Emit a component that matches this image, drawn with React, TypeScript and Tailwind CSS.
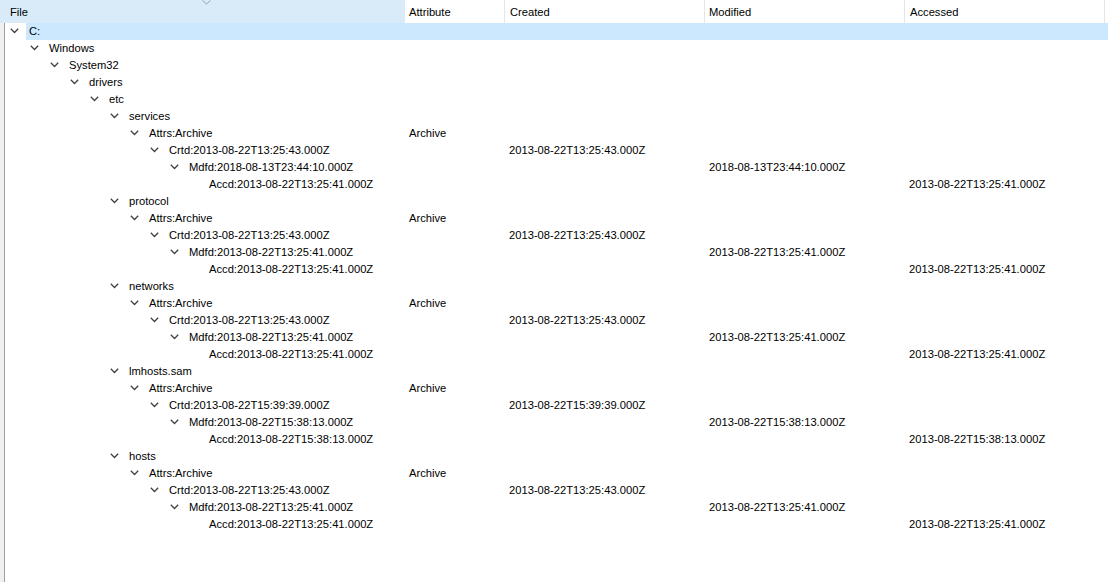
import React from 'react';

type Row = {
  level: number;
  label: string;
  expandable: boolean;
  attribute?: string;
  created?: string;
  modified?: string;
  accessed?: string;
};

const files = [
  { name: 'services', crtd: '2013-08-22T13:25:43.000Z', mdfd: '2018-08-13T23:44:10.000Z', accd: '2013-08-22T13:25:41.000Z' },
  { name: 'protocol', crtd: '2013-08-22T13:25:43.000Z', mdfd: '2013-08-22T13:25:41.000Z', accd: '2013-08-22T13:25:41.000Z' },
  { name: 'networks', crtd: '2013-08-22T13:25:43.000Z', mdfd: '2013-08-22T13:25:41.000Z', accd: '2013-08-22T13:25:41.000Z' },
  { name: 'lmhosts.sam', crtd: '2013-08-22T15:39:39.000Z', mdfd: '2013-08-22T15:38:13.000Z', accd: '2013-08-22T15:38:13.000Z' },
  { name: 'hosts', crtd: '2013-08-22T13:25:43.000Z', mdfd: '2013-08-22T13:25:41.000Z', accd: '2013-08-22T13:25:41.000Z' },
];

const rows: Row[] = [
  { level: 0, label: 'C:', expandable: true },
  { level: 1, label: 'Windows', expandable: true },
  { level: 2, label: 'System32', expandable: true },
  { level: 3, label: 'drivers', expandable: true },
  { level: 4, label: 'etc', expandable: true },
  ...files.flatMap((f) => [
    { level: 5, label: f.name, expandable: true },
    { level: 6, label: 'Attrs:Archive', expandable: true, attribute: 'Archive' },
    { level: 7, label: 'Crtd:' + f.crtd, expandable: true, created: f.crtd },
    { level: 8, label: 'Mdfd:' + f.mdfd, expandable: true, modified: f.mdfd },
    { level: 9, label: 'Accd:' + f.accd, expandable: false, accessed: f.accd },
  ]),
];

// column layout shared by header and rows
const cols = 'grid grid-cols-[405px_100px_200px_200px_200px_1fr]';

function Chevron() {
  return (
    <svg width="9" height="6" viewBox="0 0 9 6" className="shrink-0">
      <path d="M0.8 0.8 L4.5 4.5 L8.2 0.8" fill="none" stroke="#404040" strokeWidth="1.3" />
    </svg>
  );
}

function Cell({ children }: { children?: React.ReactNode }) {
  return <div className="pl-1 whitespace-nowrap overflow-hidden">{children}</div>;
}

export default function App() {
  return (
    <div
      className="w-[1108px] h-[582px] bg-white text-black text-[11.2px] overflow-hidden flex flex-col"
      style={{ fontFamily: '"Liberation Sans", Arial, sans-serif' }}
    >
      {/* header */}
      <div className={`${cols} h-[23px] items-center shrink-0`}>
        <div className="relative h-full flex items-center pl-[10px] pt-[2px] bg-[#d9ebf9]">
          File
          <svg width="9" height="5" viewBox="0 0 9 5" className="absolute left-[202px] top-0">
            <path d="M0.5 0.5 L4.5 4 L8.5 0.5" fill="none" stroke="#8ea3b8" strokeWidth="1" />
          </svg>
        </div>
        <div className="h-full flex items-center pl-1 pt-[2px] border-r border-[#e5e5e5]">Attribute</div>
        <div className="h-full flex items-center pl-[5px] pt-[2px] border-r border-[#e5e5e5]">Created</div>
        <div className="h-full flex items-center pl-1 pt-[2px] border-r border-[#e5e5e5]">Modified</div>
        <div className="h-full flex items-center pl-[5px] pt-[2px] border-r border-[#e5e5e5]">Accessed</div>
        <div className="h-full" />
      </div>

      {/* tree body */}
      <div className="flex flex-1 min-h-0">
        <div className="w-[5px] shrink-0 border-r border-[#a0a0a0] bg-[#f0f0f0]" />
        <div className="flex-1 min-w-0 -ml-[5px]">
          {rows.map((r, i) => {
            const selected = i === 0;
            return (
              <div key={i} className={`${cols} h-[17px] items-center relative`}>
                {selected && <div className="absolute left-[26px] right-0 top-0 bottom-0 bg-[#cce8ff]" />}
                <div
                  className="relative flex items-center whitespace-nowrap"
                  style={{ paddingLeft: 10 + r.level * 20 }}
                >
                  <div className="w-[9px] mr-[10px] flex items-center">{r.expandable && <Chevron />}</div>
                  <span>{r.label}</span>
                </div>
                <div className="relative"><Cell>{r.attribute}</Cell></div>
                <div className="relative"><Cell>{r.created}</Cell></div>
                <div className="relative"><Cell>{r.modified}</Cell></div>
                <div className="relative"><Cell>{r.accessed}</Cell></div>
                <div />
              </div>
            );
          })}
        </div>
      </div>
    </div>
  );
}
